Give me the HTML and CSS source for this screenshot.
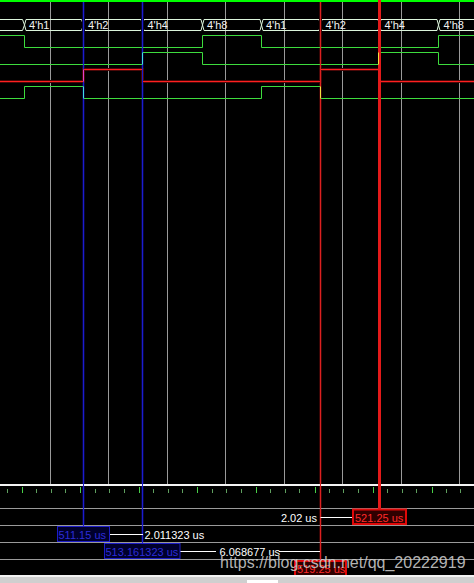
FILE: index.html
```html
<!DOCTYPE html>
<html>
<head>
<meta charset="utf-8">
<link rel="stylesheet" href="styles.css">
<title>Waveform</title>
</head>
<body>
<div class="viewer">
  <svg class="wave" width="474" height="575" viewBox="0 0 474 575" xmlns="http://www.w3.org/2000/svg">
    <!-- grid -->
    <path class="grid" d="M50.5 2V484 M108.5 2V484 M167.5 2V484 M225.5 2V484 M284.5 2V484 M342.5 2V484 M401.5 2V484 M459.5 2V484"/>
    <rect class="topbar" x="0" y="0" width="474" height="2"/>

    <!-- bus -->
    <g class="bus">
      <path d="M-10 19.5H22.5L24.5 25L22.5 30.5H-10"/>
      <path d="M26 19.5H81.5L83.5 25L81.5 30.5H26L24.5 25Z"/>
      <path d="M85 19.5H141L142.5 25L141 30.5H85L83.5 25Z"/>
      <path d="M144 19.5H201L202.5 25L201 30.5H144L142.5 25Z"/>
      <path d="M204 19.5H260L261.5 25L260 30.5H204L202.5 25Z"/>
      <path d="M263 19.5H319L320.5 25L319 30.5H263L261.5 25Z"/>
      <path d="M322 19.5H378L379.5 25L378 30.5H322L320.5 25Z"/>
      <path d="M381 19.5H437L438.5 25L437 30.5H381L379.5 25Z"/>
      <path d="M480 19.5H440L438.5 25L440 30.5H480"/>
    </g>
    <g class="bus-text">
      <text x="29" y="28.5">4'h1</text>
      <text x="88" y="28.5">4'h2</text>
      <text x="147.5" y="28.5">4'h4</text>
      <text x="207" y="28.5">4'h8</text>
      <text x="266" y="28.5">4'h1</text>
      <text x="325.5" y="28.5">4'h2</text>
      <text x="384.5" y="28.5">4'h4</text>
      <text x="443.5" y="28.5">4'h8</text>
    </g>

    <!-- cursor halos -->
    <path class="halo-blue" d="M83.5 2V526M142.5 2V543"/>
    <path class="halo-red" d="M320.5 2V560"/>

    <!-- signals -->
    <path class="sig" d="M0 35.5H24.5V47.5H202.5V35.5H261.5V47.5H438.5V35.5H474"/>
    <path class="sig" d="M0 64.5H142.5V52.5H202.5V64.5H379.5V52.5H438.5V64.5H474"/>
    <path class="sig-halo" d="M0 81.5H83.5V69.5H142.5V81.5H320.5V69.5H379.5V81.5H474"/>
    <path class="sig red" d="M0 81.5H83.5V69.5H142.5V81.5H320.5V69.5H379.5V81.5H474"/>
    <path class="sig" d="M0 98.5H24.5V86.5H83.5V98.5H261.5V86.5H320.5V98.5H474"/>

    <!-- ruler -->
    <rect class="ruler" x="0" y="484" width="474" height="2"/>
    <path class="tick-major" d="M22.5 487V493M80.5 487V493M139.5 487V493M197.5 487V493M256.5 487V493M315.5 487V493M373.5 487V493M432.5 487V493"/>
    <path class="tick-minor" d="M7.5 489V493M36.5 489V493M51.5 489V493M65.5 489V493M95.5 489V493M109.5 489V493M124.5 489V493M153.5 489V493M168.5 489V493M182.5 489V493M212.5 489V493M226.5 489V493M241.5 489V493M270.5 489V493M285.5 489V493M299.5 489V493M329.5 489V493M343.5 489V493M358.5 489V493M387.5 489V493M402.5 489V493M416.5 489V493M446.5 489V493M460.5 489V493"/>
    <path class="rowline" d="M0 508.5H474M0 525.5H474M0 542.5H474M0 559.5H474"/>

    <!-- cursors -->
    <path class="cur-blue" d="M83.5 2V526M142.5 2V543"/>
    <path class="cur-red" d="M320.5 2V560"/>
    <rect class="cur-red-main" x="378" y="0" width="3" height="509"/>

    <!-- edge highlights -->
    <path class="edge-mag" d="M83.5 69.5V81.5"/>
    <path class="edge-cyan" d="M83.5 86.5V98.5M142.5 52.5V64.5"/>
    <path class="edge-yel" d="M320.5 86.5V98.5M378.5 52.5V64.5"/>

    <!-- connectors -->
    <path class="link" d="M320.5 517.5H352M110 534.5H143M180 551.5H216M279 551.5H320"/>

    <!-- cursor labels -->
    <rect class="box-red" x="353" y="509.5" width="53" height="14.5"/>
    <text class="lbl-red" x="355" y="521.5">521.25 us</text>
    <text class="lbl" x="317" y="521.5" text-anchor="end">2.02 us</text>

    <rect class="box-blue" x="57.5" y="526.5" width="52" height="15"/>
    <text class="lbl-blue" x="58.5" y="538.5">511.15 us</text>
    <text class="lbl" x="144.5" y="538.5">2.011323 us</text>

    <rect class="box-blue" x="104.5" y="543.5" width="75.5" height="15"/>
    <text class="lbl-blue" x="105.5" y="555.5">513.161323 us</text>
    <text class="lbl" x="219.5" y="555.5">6.068677 us</text>

    <rect class="box-red" x="295" y="561" width="51" height="16"/>
    <text class="lbl-red" x="297" y="572.5">519.25 us</text>
  </svg>
  <div class="footer"><div class="tab"></div></div>
  <div class="watermark">https://blog.csdn.net/qq_20222919</div>
</div>
</body>
</html>
```
FILE: styles.css
```css
html, body {
  margin: 0;
  padding: 0;
  background: #000;
  overflow: hidden;
}

.viewer {
  position: relative;
  width: 474px;
  height: 583px;
  background: #000;
  display: flex;
  flex-direction: column;
  overflow: hidden;
}

.wave {
  display: block;
  flex: none;
}

.grid { stroke: #9a9a9a; stroke-width: 1; fill: none; }
.topbar { fill: #00ff00; }

.bus path { fill: none; stroke: #dcf5dc; stroke-width: 1; }
.bus-text text {
  font-family: "Liberation Sans", Arial, sans-serif;
  font-size: 11px;
  fill: #f2f2f2;
}

.halo-blue { stroke: #06063a; stroke-width: 3; }
.halo-red { stroke: #3a0606; stroke-width: 3; }

.sig { fill: none; stroke: #3ddc3d; stroke-width: 1; }
.sig.red { stroke: #ff2020; }
.sig-halo { fill: none; stroke: #4a0808; stroke-width: 3; }

.ruler { fill: #f4f4f4; }
.tick-major { stroke: #48d048; stroke-width: 1; }
.tick-minor { stroke: #5f9f5f; stroke-width: 1; }
.rowline { stroke: #9a9a9a; stroke-width: 1; }

.cur-blue { stroke: #1c1cd0; stroke-width: 1; }
.cur-red { stroke: #dc2020; stroke-width: 1; }
.cur-red-main { fill: #e41a1a; }

.edge-mag { stroke: #e040d0; stroke-width: 1; }
.edge-cyan { stroke: #40e0e0; stroke-width: 1; }
.edge-yel { stroke: #f0e040; stroke-width: 1; }

.link { stroke: #ffffff; stroke-width: 1; }

.box-red { fill: #300000; stroke: #e00808; stroke-width: 2; }
.box-blue { fill: #00002c; stroke: #1c1cc8; stroke-width: 1; }

.lbl, .lbl-red, .lbl-blue {
  font-family: "Liberation Sans", Arial, sans-serif;
  font-size: 11px;
}
.lbl { fill: #ffffff; }
.lbl-red { fill: #ff2a2a; }
.lbl-blue { fill: #2c2cd8; }

.footer {
  flex: 1;
  background: #cfcfcf;
  border-top: 2px solid #f2f2f2;
  display: flex;
  align-items: flex-end;
}

.tab {
  margin-left: 247px;
  width: 31px;
  height: 3px;
  background: #ffffff;
}

.watermark {
  position: absolute;
  left: 220px;
  top: 555px;
  font-family: "Liberation Sans", Arial, sans-serif;
  font-size: 16px;
  line-height: 16px;
  color: rgba(205, 205, 205, 0.88);
  white-space: nowrap;
}
```
